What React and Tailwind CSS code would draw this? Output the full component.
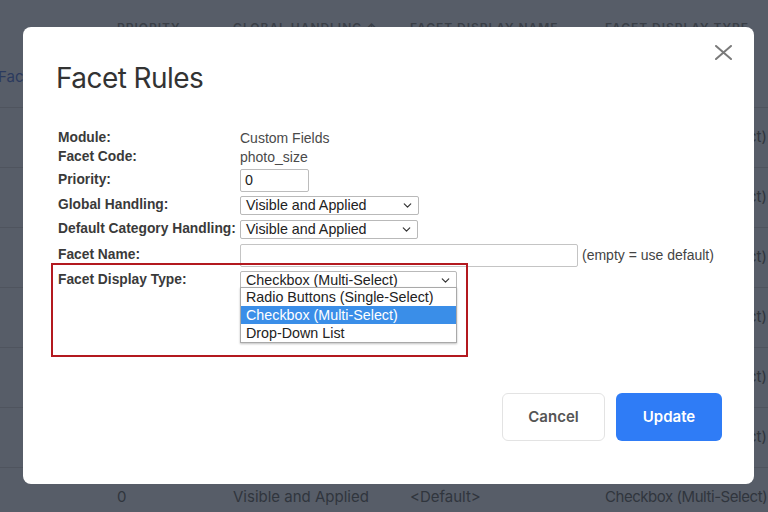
import { ChevronDown } from "lucide-react";

const bgRows = [
  { first: "Face", cells: ["", "", "", ""] },
  { first: "", cells: ["", "", "", "ct)"] },
  { first: "", cells: ["", "", "", "ct)"] },
  { first: "", cells: ["", "", "", "ct)"] },
  { first: "", cells: ["", "", "", "ct)"] },
  { first: "", cells: ["", "", "", "ct)"] },
  { first: "", cells: ["", "", "", "ct)"] },
  { first: "", cells: ["0", "Visible and Applied", "<Default>", "Checkbox (Multi-Select)"] },
];

const FakeSelect = ({ value, width }) => (
  <div
    className={`flex h-[19px] items-center justify-between rounded-[2px] border border-[#b9b9b9] bg-white pl-[5px] pr-[4px] text-[14.3px] leading-none text-[#222] ${width}`}
  >
    <span>{value}</span>
    <ChevronDown size={13} strokeWidth={2.2} className="text-[#333]" />
  </div>
);

const Row = ({ label, height, children }) => (
  <div className={`flex items-center ${height}`}>
    <div className="w-[182px] shrink-0 whitespace-nowrap text-[13.8px] font-bold text-[#3a3a3a]">{label}</div>
    <div className="flex items-center">{children}</div>
  </div>
);

export default function App() {
  return (
    <div
      className="relative h-[512px] w-[768px] overflow-hidden bg-[#575d68]"
      style={{ fontFamily: "Inter, 'Liberation Sans', sans-serif" }}
    >
      {/* page behind the overlay */}
      <div className="-ml-[2px] text-[15px] text-[#30353d]">
        <div className="grid h-[48px] grid-cols-[119px_116px_177px_195px_1fr] items-center pt-[8px] text-[12px] font-semibold uppercase tracking-[0.08em] text-[#3a3f47]">
          <div />
          <div>Priority</div>
          <div>Global Handling ↑</div>
          <div>Facet Display Name</div>
          <div className="whitespace-nowrap">Facet Display Type</div>
        </div>
        {bgRows.map((row, i) => (
          <div
            key={i}
            className="grid h-[60px] grid-cols-[119px_116px_177px_195px_1fr] items-center border-b border-[#4f545e]"
          >
            <div className="text-[#2b3a5e]">{row.first}</div>
            {row.cells.map((c, j) => (
              <div
                key={j}
                className={
                  j === 3 && c === "ct)"
                    ? "pl-[143px]"
                    : j === 3
                    ? "whitespace-nowrap tracking-[-0.03em]"
                    : "whitespace-nowrap"
                }
              >
                {c}
              </div>
            ))}
          </div>
        ))}
      </div>

      {/* modal */}
      <div className="absolute left-[23px] top-[27px] flex h-[457px] w-[731px] flex-col rounded-[8px] bg-white pl-[33px] pr-[32px] pt-[33px] pb-[43px]">
        <button className="absolute right-[22px] top-[18px] p-0 text-[#7a7a7a]">
          <svg width="17" height="15" viewBox="0 0 17 15" fill="none">
            <path d="M1 1L16 14M16 1L1 14" stroke="currentColor" strokeWidth="2" strokeLinecap="round" />
          </svg>
        </button>

        <h2 className="text-[28px] font-normal leading-[36px] tracking-[-0.02em] text-[#333]">Facet Rules</h2>

        <div
          className="mt-[33px] flex flex-col pl-[2px]"
          style={{ fontFamily: "'Liberation Sans', Arial, sans-serif" }}
        >
          <Row label="Module:" height="h-[19px]">
            <span className="text-[14px] text-[#4a4a4a]">Custom Fields</span>
          </Row>
          <Row label="Facet Code:" height="h-[19px]">
            <span className="text-[14px] text-[#4a4a4a]">photo_size</span>
          </Row>
          <Row label="Priority:" height="h-[26px]">
            <div className="mt-[1px] flex h-[23px] w-[69px] items-center rounded-[2px] border border-[#bcbcbc] pl-[4px] text-[14.3px] text-[#222]">
              0
            </div>
          </Row>
          <Row label="Global Handling:" height="h-[24px]">
            <FakeSelect value="Visible and Applied" width="w-[179px]" />
          </Row>
          <Row label="Default Category Handling:" height="h-[25px]">
            <FakeSelect value="Visible and Applied" width="w-[178px]" />
          </Row>
          <Row label="Facet Name:" height="h-[26px]">
            <div className="h-[23px] w-[338px] rounded-[2px] border border-[#c4c4c4]" />
            <span className="ml-[4px] text-[14px] text-[#444]">(empty = use default)</span>
          </Row>

          <div className="relative -ml-[7px] -mt-[5px] h-[94px] w-[417px] border-2 border-[#b3191f] pl-[5px] pt-[5px]">
            <Row label="Facet Display Type:" height="h-[20px]">
              <FakeSelect value="Checkbox (Multi-Select)" width="w-[217px]" />
            </Row>
            <div className="absolute left-[187px] top-[22px] flex w-[217px] flex-col border border-[#a9a9a9] bg-white text-[14.3px] leading-[18px] text-[#222] shadow-[0_1px_2px_rgba(0,0,0,0.25)]">
              <div className="px-[5px]">Radio Buttons (Single-Select)</div>
              <div className="bg-[#3a8ee8] px-[5px] text-white">Checkbox (Multi-Select)</div>
              <div className="px-[5px]">Drop-Down List</div>
            </div>
          </div>
        </div>

        <div className="mt-auto flex justify-end gap-[11px]">
          <button className="h-[48px] w-[103px] rounded-[6px] border border-[#e3e3e3] bg-white text-[15px] font-semibold text-[#555]">
            Cancel
          </button>
          <button className="h-[48px] w-[106px] rounded-[6px] bg-[#2f7cf6] text-[15px] font-semibold text-white">
            Update
          </button>
        </div>
      </div>
    </div>
  );
}
